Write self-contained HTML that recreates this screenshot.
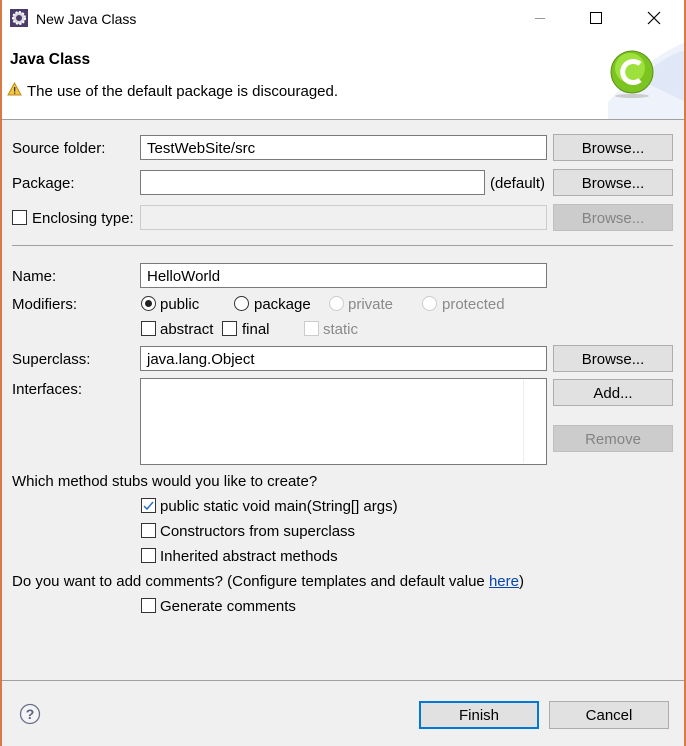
<!DOCTYPE html><html><head><style>
*{margin:0;padding:0;box-sizing:border-box}
body{width:686px;height:746px;position:relative;background:#f0f0f0;font-family:"Liberation Sans",sans-serif;font-size:15px;color:#000;overflow:hidden}
.a{position:absolute;white-space:nowrap}
.inp{position:absolute;background:#fff;border:1px solid #7a7a7a;height:25px;padding:4px 6px 0;line-height:17px}
.btn{position:absolute;background:#e1e1e1;border:1px solid #adadad;width:120px;height:27px;text-align:center;line-height:28px}
.dis{background:#cccccc;border-color:#bfbfbf;color:#838383}
.cb{position:absolute;width:15px;height:15px;border:1px solid #333;background:#fff}
.rd{position:absolute;width:15px;height:15px;border:1px solid #333;border-radius:50%;background:#fff}
.lbl{position:absolute;white-space:nowrap;line-height:17px;padding-top:2px}
</style></head><body>
<div class="a" style="left:0;top:0;width:686px;height:119px;background:#fff"></div>
<svg class="a" style="left:0;top:40px" width="686" height="80"><path d="M608 62 C635 32 660 12 686 2 L686 80 L608 80 Z" fill="#eef2fa"/><path d="M640 40 C655 24 670 14 686 10 L686 62 Z" fill="#e0e7f6"/></svg>
<div class="a" style="left:0;top:119px;width:686px;height:1px;background:#a0a0a0"></div>
<div class="a" style="left:0;top:0;width:2px;height:746px;background:#d87a48"></div>
<div class="a" style="left:684px;top:0;width:2px;height:746px;background:#d87a48"></div>
<svg class="a" style="left:10px;top:9px" width="18" height="18"><rect x="0" y="0" width="18" height="18" fill="#4b3b6a"/><circle cx="9" cy="9" r="6" fill="#d8d8e0" stroke="#fff" stroke-width="2" stroke-dasharray="2 1.5"/><circle cx="9" cy="9" r="3" fill="#4b3b6a"/></svg>
<div class="lbl" style="left:36px;top:9px;font-size:14px">New Java Class</div>
<div class="a" style="left:535px;top:18px;width:10px;height:1px;background:#999"></div>
<div class="a" style="left:590px;top:12px;width:12px;height:12px;border:1px solid #000"></div>
<svg class="a" style="left:647px;top:11px" width="14" height="14"><path d="M1 1L13 13M13 1L1 13" stroke="#000" stroke-width="1.2"/></svg>
<div class="lbl" style="left:10px;top:49px;font-weight:bold;font-size:15.5px">Java Class</div>
<svg class="a" style="left:7px;top:82px" width="15" height="14"><path d="M7.5 1L14 13H1Z" fill="#f5c542" stroke="#b88a1a"/><rect x="7" y="5" width="1.3" height="4.5" fill="#333"/><rect x="7" y="10.5" width="1.3" height="1.3" fill="#333"/></svg>
<div class="lbl" style="left:27px;top:81px">The use of the default package is discouraged.</div>
<svg class="a" style="left:606px;top:47px" width="54" height="54"><ellipse cx="26" cy="49" rx="17" ry="2" fill="#ccc"/><circle cx="26" cy="25" r="21" fill="#7cc520" stroke="#5a8e1a"/><circle cx="24" cy="21" r="15" fill="#9ee03c"/><path d="M34 17 A10.5 10.5 0 1 0 34 33" fill="none" stroke="#fff" stroke-width="5"/></svg>

<div class="lbl" style="left:12px;top:138px">Source folder:</div>
<div class="inp" style="left:140px;top:135px;width:407px">TestWebSite/src</div>
<div class="btn" style="left:553px;top:134px">Browse...</div>
<div class="lbl" style="left:12px;top:173px">Package:</div>
<div class="inp" style="left:140px;top:170px;width:345px"></div>
<div class="lbl" style="left:490px;top:173px">(default)</div>
<div class="btn" style="left:553px;top:169px">Browse...</div>
<div class="cb" style="left:12px;top:210px"></div>
<div class="lbl" style="left:32px;top:208px">Enclosing type:</div>
<div class="inp" style="left:140px;top:205px;width:407px;background:#f0f0f0;border-color:#ccc"></div>
<div class="btn dis" style="left:553px;top:204px">Browse...</div>
<div class="a" style="left:12px;top:245px;width:661px;height:1px;background:#a0a0a0"></div>

<div class="lbl" style="left:12px;top:266px">Name:</div>
<div class="inp" style="left:140px;top:263px;width:407px">HelloWorld</div>
<div class="lbl" style="left:12px;top:294px">Modifiers:</div>
<div class="rd" style="left:141px;top:296px"></div><div class="a" style="left:145px;top:300px;width:7px;height:7px;border-radius:50%;background:#222"></div>
<div class="lbl" style="left:160px;top:294px">public</div>
<div class="rd" style="left:234px;top:296px"></div>
<div class="lbl" style="left:254px;top:294px">package</div>
<div class="rd" style="left:329px;top:296px;border-color:#ccc"></div>
<div class="lbl" style="left:348px;top:294px;color:#8a8a8a">private</div>
<div class="rd" style="left:422px;top:296px;border-color:#ccc"></div>
<div class="lbl" style="left:442px;top:294px;color:#8a8a8a">protected</div>
<div class="cb" style="left:141px;top:321px"></div>
<div class="lbl" style="left:160px;top:319px">abstract</div>
<div class="cb" style="left:222px;top:321px"></div>
<div class="lbl" style="left:242px;top:319px">final</div>
<div class="cb" style="left:304px;top:321px;border-color:#ccc"></div>
<div class="lbl" style="left:323px;top:319px;color:#8a8a8a">static</div>
<div class="lbl" style="left:12px;top:349px">Superclass:</div>
<div class="inp" style="left:140px;top:346px;width:407px">java.lang.Object</div>
<div class="btn" style="left:553px;top:345px">Browse...</div>
<div class="lbl" style="left:12px;top:379px">Interfaces:</div>
<div class="inp" style="left:140px;top:378px;width:407px;height:87px"></div>
<div class="a" style="left:523px;top:380px;width:1px;height:83px;background:#e6eefb"></div>
<div class="btn" style="left:553px;top:379px">Add...</div>
<div class="btn dis" style="left:553px;top:425px">Remove</div>

<div class="lbl" style="left:12px;top:471px">Which method stubs would you like to create?</div>
<div class="cb" style="left:141px;top:498px"></div>
<svg class="a" style="left:142px;top:499px" width="13" height="13"><path d="M2 7L5 10L11 3" stroke="#2a6fc0" stroke-width="1.5" fill="none"/></svg>
<div class="lbl" style="left:160px;top:496px">public static void main(String[] args)</div>
<div class="cb" style="left:141px;top:523px"></div>
<div class="lbl" style="left:160px;top:521px">Constructors from superclass</div>
<div class="cb" style="left:141px;top:548px"></div>
<div class="lbl" style="left:160px;top:546px">Inherited abstract methods</div>
<div class="lbl" style="left:12px;top:571px">Do you want to add comments? (Configure templates and default value <span style="color:#0645ad;text-decoration:underline">here</span>)</div>
<div class="cb" style="left:141px;top:598px"></div>
<div class="lbl" style="left:160px;top:596px">Generate comments</div>

<div class="a" style="left:2px;top:680px;width:682px;height:1px;background:#a0a0a0"></div>
<svg class="a" style="left:19px;top:703px" width="22" height="22"><circle cx="11" cy="11" r="9.5" fill="#f4f4f8" stroke="#6a7088" stroke-width="1.3"/><text x="11" y="16" text-anchor="middle" font-family="Liberation Sans" font-size="14" font-weight="bold" fill="#5a6078">?</text></svg>
<div class="btn" style="left:419px;top:701px;width:120px;height:28px;border:2px solid #0078d7;line-height:26px">Finish</div>
<div class="btn" style="left:549px;top:701px;height:28px;line-height:28px">Cancel</div>
</body></html>
